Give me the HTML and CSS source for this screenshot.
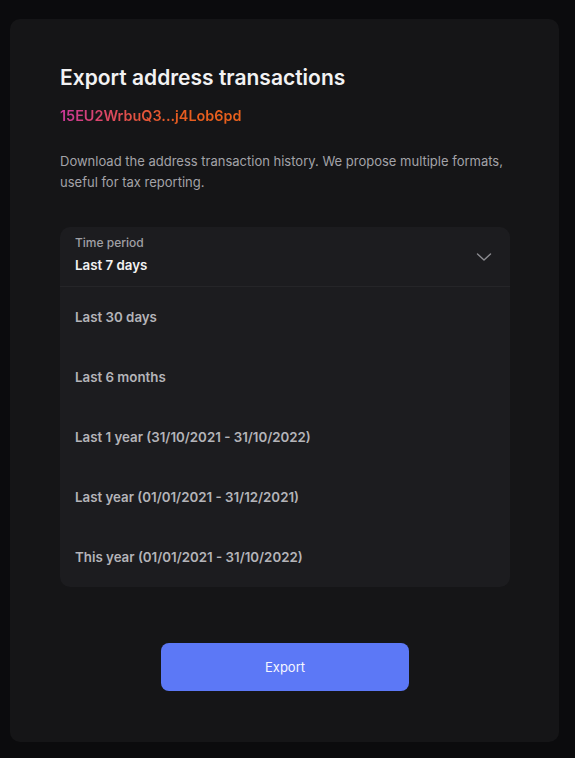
FILE: index.html
```html
<!DOCTYPE html>
<html>
<head>
<meta charset="utf-8">
<link rel="stylesheet" href="styles.css">
</head>
<body>
<div class="card">
  <h1 class="title">Export address transactions</h1>
  <div class="address">15EU2WrbuQ3...j4Lob6pd</div>
  <p class="desc">Download the address transaction history. We propose multiple formats, useful for tax reporting.</p>
  <div class="select">
    <div class="select-head">
      <div class="head-text">
        <div class="label">Time period</div>
        <div class="value">Last 7 days</div>
      </div>
      <svg class="chev" width="16" height="10" viewBox="0 0 16 10"><path d="M1.5 2 L8 8 L14.5 2" fill="none" stroke="#8c8c91" stroke-width="1.4" stroke-linecap="round" stroke-linejoin="round"/></svg>
    </div>
    <div class="option">Last 30 days</div>
    <div class="option">Last 6 months</div>
    <div class="option">Last 1 year (31/10/2021 - 31/10/2022)</div>
    <div class="option">Last year (01/01/2021 - 31/12/2021)</div>
    <div class="option">This year (01/01/2021 - 31/10/2022)</div>
  </div>
  <div class="actions">
    <button class="btn">Export</button>
  </div>
</div>
</body>
</html>
```
FILE: styles.css
```css
html, body {
  margin: 0;
  padding: 0;
  background: #0b0b0d;
  font-family: Inter, "Noto Sans", sans-serif;
}
body {
  padding: 19px 16px 16px 10px;
}
.card {
  width: 549px;
  height: 723px;
  box-sizing: border-box;
  background: #151517;
  border-radius: 10px;
  padding: 45px 49px 51px 50px;
  display: flex;
  flex-direction: column;
}
.title {
  margin: 0;
  font-size: 21px;
  line-height: 28px;
  font-weight: 600;
  color: #f2f2f3;
  letter-spacing: 0;
}
.address {
  margin-top: 14px;
  font-size: 14.4px;
  line-height: 20px;
  font-weight: 600;
  background: linear-gradient(90deg, #c8379a 0%, #d94470 20%, #e2533f 42%, #e65c20 65%, #e8601c 100%);
  -webkit-background-clip: text;
  background-clip: text;
  color: transparent;
  align-self: flex-start;
}
.desc {
  margin: 25px 0 0;
  font-size: 13px;
  line-height: 21px;
  color: #a3a3a8;
}
.select {
  margin-top: 34px;
  background: #1c1c1f;
  border-radius: 10px;
}
.select-head {
  height: 60px;
  box-sizing: border-box;
  padding: 7px 18px 0 15px;
  display: flex;
  align-items: center;
  justify-content: space-between;
  border-bottom: 1px solid #252528;
}
.head-text {
  align-self: flex-start;
}
.label {
  font-size: 12px;
  line-height: 18px;
  color: #a0a0a5;
  font-weight: 500;
}
.value {
  margin-top: 2px;
  font-size: 13.3px;
  line-height: 22px;
  font-weight: 600;
  color: #f2f2f3;
}
.chev {
  margin-top: -6px;
}
.option {
  height: 60px;
  display: flex;
  align-items: center;
  padding: 0 15px;
  font-size: 13.3px;
  font-weight: 600;
  color: #b4b4b9;
}
.select .option:first-of-type {
  height: 59px;
}
.actions {
  margin-top: 56px;
  display: flex;
  justify-content: center;
}
.btn {
  width: 248px;
  height: 48px;
  border: none;
  border-radius: 8px;
  background: #5c78f6;
  color: #f5f6ff;
  font-family: Inter, "Noto Sans", sans-serif;
  font-size: 13px;
  font-weight: 400;
  cursor: pointer;
}
```
